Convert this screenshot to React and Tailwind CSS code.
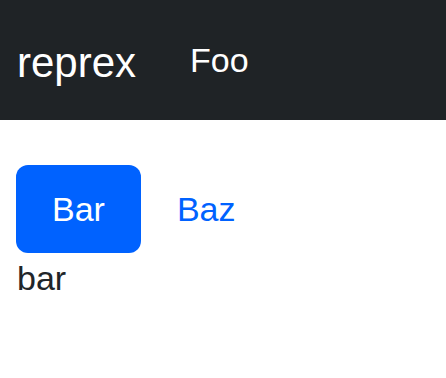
export default function App() {
  return (
    <div className="min-h-screen bg-white text-[#212529]" style={{ fontFamily: '"Liberation Sans", Arial, sans-serif' }}>
      {/* Navbar */}
      <nav className="h-[120px] bg-[#1f2326] flex items-center px-4">
        <a className="mt-[5px] text-[42px] leading-[60px] text-white mr-[31px] pl-[1px]">reprex</a>
        <a className="text-[34px] leading-[48px] text-white px-[23px]">Foo</a>
      </nav>

      {/* Main content */}
      <main className="px-4 pt-[45px]">
        <ul className="flex items-center">
          <li>
            <button className="block bg-[#0062ff] text-white rounded-[12px] px-[36px] py-[20px] text-[34px] leading-[48px]">
              Bar
            </button>
          </li>
          <li>
            <button className="block text-[#0062ff] px-[36px] py-[20px] text-[34px] leading-[48px]">
              Baz
            </button>
          </li>
        </ul>
        <p className="text-[34px] leading-[50px] pl-[1px]">bar</p>
      </main>
    </div>
  );
}
